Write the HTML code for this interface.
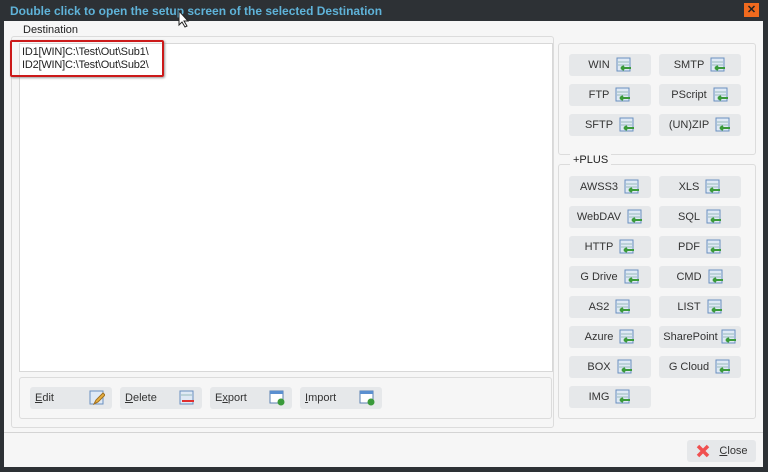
<!DOCTYPE html><html><head><style>
body{margin:0;width:768px;height:472px;background:#2d3135;font-family:"Liberation Sans",sans-serif;font-size:11px;color:#222;position:relative;overflow:hidden}
.a{position:absolute}
.win{left:4px;top:21px;width:759px;height:446px;background:#f6f6f6}
.title{left:10px;top:4px;color:#5fb3d9;font-weight:bold;font-size:12px}
.x{left:744px;top:3px;width:15px;height:14px;background:#f06a1e;color:#222;font-size:11px;font-weight:bold;text-align:center;line-height:14px}
.grp{border:1px solid #dcdcdc;border-radius:3px}
.lbl{background:#f6f6f6;padding:0 3px;font-size:11px}
.b{position:absolute;height:22px;width:82px;background:#e6e8ea;border-radius:3px;display:flex;align-items:center;justify-content:center;gap:6px;font-size:11px;color:#333}
.bl{justify-content:space-between;padding:0 7px 0 5px;box-sizing:border-box}
.ic{width:16px;height:16px;display:inline-block}
u{text-decoration:underline}
</style></head><body>
<div class="a title">Double click to open the setup screen of the selected Destination</div>
<div class="a x">✕</div>
<div class="a win"></div>
<div class="a grp" style="left:11px;top:36px;width:541px;height:390px"></div>
<div class="a lbl" style="left:20px;top:24px">Destination</div>
<div class="a" style="left:19px;top:43px;width:532px;height:327px;background:#fff;border:1px solid #d8d8d8"></div>
<div class="a" style="left:22px;top:46px;line-height:13px;font-size:11px;color:#222;letter-spacing:-0.2px">ID1[WIN]C:\Test\Out\Sub1\<br>ID2[WIN]C:\Test\Out\Sub2\</div>
<div class="a" style="left:10px;top:40px;width:150px;height:33px;border:2px solid #cc1a1a;border-radius:2px;box-shadow:1px 1px 2px #999"></div>
<div class="a grp" style="left:19px;top:377px;width:531px;height:40px"></div>
<svg width="0" height="0" style="position:absolute"><defs>
<g id="ti"><rect x="1" y="1" width="13" height="13" fill="#dfe9f5" stroke="#6a8fc0"/><line x1="2" y1="5" x2="13" y2="5" stroke="#9bb"/><line x1="2" y1="8" x2="13" y2="8" stroke="#9bb"/><path d="M5 11h10M5 11l3-2M5 11l3 2" stroke="#3a9a3a" stroke-width="2" fill="none"/></g>
</defs></svg>
<div class="b bl" style="left:30px;top:387px"><span><u>E</u>dit</span><svg class="ic" viewBox="0 0 16 16"><rect x="1" y="1" width="13" height="13" fill="#dfe9f5" stroke="#6a8fc0"/><path d="M5 14l2-4 7-7 2 2-7 7z" fill="#e8b040" stroke="#a07020"/></svg></div>
<div class="b bl" style="left:120px;top:387px"><span><u>D</u>elete</span><svg class="ic" viewBox="0 0 16 16"><rect x="1" y="1" width="13" height="13" fill="#dfe9f5" stroke="#6a8fc0"/><line x1="2" y1="5" x2="13" y2="5" stroke="#9bb"/><path d="M3 11h12" stroke="#e03030" stroke-width="2"/></svg></div>
<div class="b bl" style="left:210px;top:387px"><span>E<u>x</u>port</span><svg class="ic" viewBox="0 0 16 16"><rect x="1" y="1" width="13" height="12" fill="#fff" stroke="#5a7fb0"/><rect x="1" y="1" width="13" height="3" fill="#5a8fd0"/><circle cx="12" cy="12" r="3.5" fill="#3a9a3a"/></svg></div>
<div class="b bl" style="left:300px;top:387px"><span><u>I</u>mport</span><svg class="ic" viewBox="0 0 16 16"><rect x="1" y="1" width="13" height="12" fill="#fff" stroke="#5a7fb0"/><rect x="1" y="1" width="13" height="3" fill="#5a8fd0"/><circle cx="12" cy="12" r="3.5" fill="#3a9a3a"/></svg></div>
<div class="a grp" style="left:558px;top:43px;width:196px;height:110px"></div>
<div class="a grp" style="left:558px;top:164px;width:196px;height:253px"></div>
<div class="a lbl" style="left:570px;top:154px">+PLUS</div>
<div class="b" style="left:569px;top:54px">WIN<svg class="ic" viewBox="0 0 16 16"><use href="#ti"/></svg></div>
<div class="b" style="left:659px;top:54px">SMTP<svg class="ic" viewBox="0 0 16 16"><use href="#ti"/></svg></div>
<div class="b" style="left:569px;top:84px">FTP<svg class="ic" viewBox="0 0 16 16"><use href="#ti"/></svg></div>
<div class="b" style="left:659px;top:84px">PScript<svg class="ic" viewBox="0 0 16 16"><use href="#ti"/></svg></div>
<div class="b" style="left:569px;top:114px">SFTP<svg class="ic" viewBox="0 0 16 16"><use href="#ti"/></svg></div>
<div class="b" style="left:659px;top:114px">(UN)ZIP<svg class="ic" viewBox="0 0 16 16"><use href="#ti"/></svg></div>
<div class="b" style="left:569px;top:176px">AWSS3<svg class="ic" viewBox="0 0 16 16"><use href="#ti"/></svg></div>
<div class="b" style="left:659px;top:176px">XLS<svg class="ic" viewBox="0 0 16 16"><use href="#ti"/></svg></div>
<div class="b" style="left:569px;top:206px">WebDAV<svg class="ic" viewBox="0 0 16 16"><use href="#ti"/></svg></div>
<div class="b" style="left:659px;top:206px">SQL<svg class="ic" viewBox="0 0 16 16"><use href="#ti"/></svg></div>
<div class="b" style="left:569px;top:236px">HTTP<svg class="ic" viewBox="0 0 16 16"><use href="#ti"/></svg></div>
<div class="b" style="left:659px;top:236px">PDF<svg class="ic" viewBox="0 0 16 16"><use href="#ti"/></svg></div>
<div class="b" style="left:569px;top:266px">G Drive<svg class="ic" viewBox="0 0 16 16"><use href="#ti"/></svg></div>
<div class="b" style="left:659px;top:266px">CMD<svg class="ic" viewBox="0 0 16 16"><use href="#ti"/></svg></div>
<div class="b" style="left:569px;top:296px">AS2<svg class="ic" viewBox="0 0 16 16"><use href="#ti"/></svg></div>
<div class="b" style="left:659px;top:296px">LIST<svg class="ic" viewBox="0 0 16 16"><use href="#ti"/></svg></div>
<div class="b" style="left:569px;top:326px">Azure<svg class="ic" viewBox="0 0 16 16"><use href="#ti"/></svg></div>
<div class="b" style="left:659px;top:326px;gap:3px">SharePoint<svg class="ic" viewBox="0 0 16 16"><use href="#ti"/></svg></div>
<div class="b" style="left:569px;top:356px">BOX<svg class="ic" viewBox="0 0 16 16"><use href="#ti"/></svg></div>
<div class="b" style="left:659px;top:356px">G Cloud<svg class="ic" viewBox="0 0 16 16"><use href="#ti"/></svg></div>
<div class="b" style="left:569px;top:386px">IMG<svg class="ic" viewBox="0 0 16 16"><use href="#ti"/></svg></div>
<div class="a" style="left:4px;top:432px;width:759px;height:1px;background:#d4d4d4"></div>
<div class="b" style="left:687px;top:440px;width:69px;gap:8px"><svg class="ic" viewBox="0 0 16 16"><path d="M3 3l10 10M13 3L3 13" stroke="#f05050" stroke-width="3.5"/></svg><span><u>C</u>lose</span></div>
<svg class="a" style="left:178px;top:10px" width="12" height="18" viewBox="0 0 12 18"><path d="M1 1v14l3-3 3 5 2-1-3-5h4z" fill="#fff" stroke="#222"/></svg>
</body></html>
